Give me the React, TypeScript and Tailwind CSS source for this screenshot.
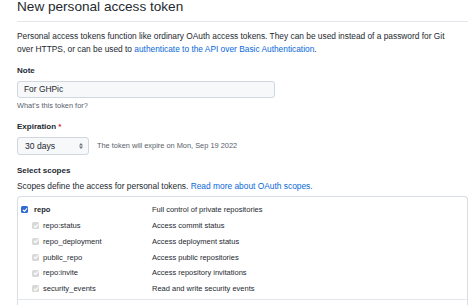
import React from "react";

const Check = ({ disabled }: { disabled?: boolean }) => (
  <span
    className={
      disabled
        ? "flex h-[7px] w-[7px] shrink-0 items-center justify-center rounded-[1.5px] bg-[#d9d9d9]"
        : "flex h-[7px] w-[7px] shrink-0 items-center justify-center rounded-[1.5px] bg-[#2f6bd3]"
    }
  >
    <svg width="6" height="6" viewBox="0 0 10 10">
      <polyline
        points="2,5.2 4.2,7.4 8,2.6"
        fill="none"
        stroke="#ffffff"
        strokeWidth="1.8"
        strokeLinecap="round"
        strokeLinejoin="round"
      />
    </svg>
  </span>
);

const rows = [
  { name: "repo:status", desc: "Access commit status" },
  { name: "repo_deployment", desc: "Access deployment status" },
  { name: "public_repo", desc: "Access public repositories" },
  { name: "repo:invite", desc: "Access repository invitations" },
  { name: "security_events", desc: "Read and write security events" },
];

export default function App() {
  return (
    <div className="h-[305px] w-[474px] overflow-hidden bg-white font-['Liberation_Sans',Arial,sans-serif] text-[#24292f]">
      <div className="ml-[17px] w-[451px]">
        <div className="box-border h-[22px] border-b border-[#e3e7eb] pt-[1px] text-[13.6px] leading-[12px]">
          New personal access token
        </div>
        <p className="mt-[8px] whitespace-nowrap text-[8.35px] leading-[13px]">
          Personal access tokens function like ordinary OAuth access tokens. They can be used instead of a password for Git
          <br />
          over HTTPS, or can be used to{" "}
          <span className="text-[#0969da]">authenticate to the API over Basic Authentication</span>.
        </p>

        <div className="mt-[9px] text-[8px] font-bold leading-[12px]">Note</div>
        <div className="mt-[4px] box-border flex h-[17px] w-[258px] items-center rounded-[3px] border border-[#d0d7de] bg-[#f6f8fa] pl-[6px] text-[8.4px]">
          For GHPic
        </div>
        <div className="mt-[3px] text-[7.4px] leading-[10px] text-[#57606a]">What's this token for?</div>

        <div className="mt-[10px] text-[8px] font-bold leading-[12px]">
          Expiration <span className="text-[#cf222e]">*</span>
        </div>
        <div className="mt-[4px] flex items-center gap-[8px]">
          <div className="box-border flex h-[18px] w-[72px] items-center justify-between rounded-[3px] border border-[#d0d7de] bg-[#f6f8fa] pl-[7px] pr-[5px] text-[8.6px]">
            <span>30 days</span>
            <svg width="4" height="6" viewBox="0 0 4 6">
              <polygon points="0,2.4 2,0 4,2.4" fill="#6e7781" />
              <polygon points="0,3.6 2,6 4,3.6" fill="#6e7781" />
            </svg>
          </div>
          <span className="text-[7.4px] text-[#57606a]">The token will expire on Mon, Sep 19 2022</span>
        </div>

        <div className="mt-[10px] text-[8px] font-bold leading-[12px]">Select scopes</div>
        <div className="mt-[3px] whitespace-nowrap text-[8.4px] leading-[12px]">
          Scopes define the access for personal tokens.{" "}
          <span className="text-[#0969da]">Read more about OAuth scopes.</span>
        </div>

        <div className="mt-[4px] rounded-t-[4px] border border-b-0 border-[#d8dee4]">
          <div className="border-b border-[#e3e7eb] pb-[2px] pt-[5px] text-[7.6px]">
            <div className="grid h-[15.8px] grid-cols-[134px_1fr] items-center">
              <div className="flex items-center gap-[6px] pl-[3px]">
                <Check />
                <span className="font-bold">repo</span>
              </div>
              <span className="text-[7.5px]">Full control of private repositories</span>
            </div>
            {rows.map((r) => (
              <div key={r.name} className="grid h-[15.8px] grid-cols-[134px_1fr] items-center">
                <div className="flex items-center gap-[4px] pl-[14px]">
                  <Check disabled />
                  <span>{r.name}</span>
                </div>
                <span className="text-[7.5px]">{r.desc}</span>
              </div>
            ))}
          </div>
          <div className="h-[20px]" />
        </div>
      </div>
    </div>
  );
}
